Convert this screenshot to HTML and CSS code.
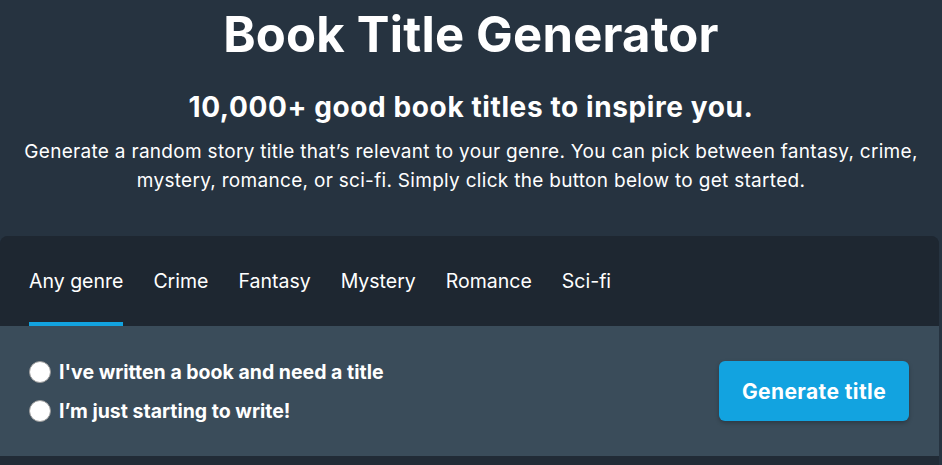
FILE: index.html
```html
<!DOCTYPE html>
<html lang="en">
<head>
<meta charset="utf-8">
<title>Book Title Generator</title>
<link rel="stylesheet" href="styles.css">
</head>
<body>
<header class="hero">
  <h1 class="hero-title">Book Title Generator</h1>
  <h2 class="hero-sub">10,000+ good book titles to inspire you.</h2>
  <p class="hero-text">Generate a random story title that’s relevant to your genre. You can pick between fantasy, crime,<br>mystery, romance, or sci-fi. Simply click the button below to get started.</p>
</header>
<section class="card">
  <nav class="tabs">
    <span class="tab active">Any genre</span>
    <span class="tab">Crime</span>
    <span class="tab">Fantasy</span>
    <span class="tab">Mystery</span>
    <span class="tab">Romance</span>
    <span class="tab">Sci-fi</span>
  </nav>
  <div class="panel">
    <div class="options">
      <label class="option"><span class="radio"></span>I've written a book and need a title</label>
      <label class="option"><span class="radio"></span>I’m just starting to write!</label>
    </div>
    <button class="generate">Generate title</button>
  </div>
</section>
</body>
</html>
```
FILE: styles.css
```css
html, body {
  margin: 0;
  padding: 0;
}
body {
  background: #263340;
  color: #ffffff;
  font-family: Inter, "Open Sans", sans-serif;
  width: 942px;
  height: 465px;
  overflow: hidden;
}
.hero {
  text-align: center;
  padding-top: 6px;
}
.hero-title {
  margin: 0;
  font-size: 49px;
  line-height: 58px;
  font-weight: 700;
  letter-spacing: 0.2px;
}
.hero-sub {
  margin: 25px 0 0;
  font-size: 28px;
  line-height: 36px;
  font-weight: 700;
  letter-spacing: 0.6px;
}
.hero-text {
  margin: 12px 0 0;
  font-size: 19px;
  line-height: 29px;
  font-weight: 400;
  letter-spacing: 0.3px;
}
.card {
  margin-top: 41px;
  width: 939px;
  background: #212b36;
  border-radius: 8px 8px 0 0;
  padding-bottom: 20px;
}
.tabs {
  display: flex;
  gap: 30px;
  padding: 0 29px;
  height: 90px;
  background: #1e2731;
  border-radius: 8px 8px 0 0;
  align-items: stretch;
}
.tab {
  display: flex;
  align-items: center;
  padding-top: 3px;
  font-size: 19.5px;
  border-bottom: 4px solid transparent;
  box-sizing: border-box;
}
.tab.active {
  border-bottom-color: #12a3e0;
}
.panel {
  background: #3a4c5a;
  height: 130px;
  box-sizing: border-box;
  padding: 35px 30px 0 29px;
  display: flex;
  justify-content: space-between;
  align-items: flex-start;
}
.options {
  display: flex;
  flex-direction: column;
  gap: 17px;
}
.option {
  display: flex;
  align-items: center;
  gap: 8px;
  font-size: 19.5px;
  font-weight: 700;
  line-height: 22px;
}
.radio {
  width: 20px;
  height: 20px;
  border-radius: 50%;
  background: #ffffff;
  border: 1px solid #9a9a9a;
  flex: none;
}
.generate {
  width: 190px;
  height: 60px;
  border: none;
  border-radius: 6px;
  background: #12a3e0;
  color: #ffffff;
  font-family: inherit;
  font-size: 21px;
  font-weight: 700;
  letter-spacing: 0.4px;
  box-shadow: 0 2px 4px rgba(0,0,0,0.25);
}
```
